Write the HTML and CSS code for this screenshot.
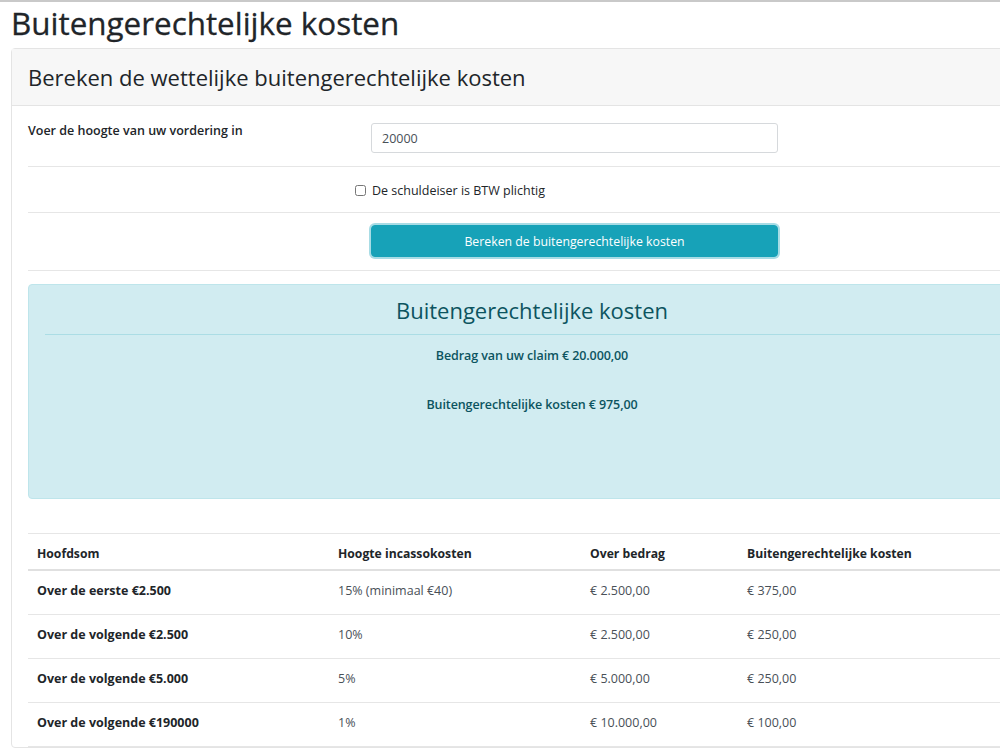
FILE: index.html
```html
<!DOCTYPE html>
<html lang="nl">
<head>
<meta charset="utf-8">
<title>Buitengerechtelijke kosten</title>
<link rel="stylesheet" href="styles.css">
</head>
<body>
<div class="page">
  <h1 class="title">Buitengerechtelijke kosten</h1>
  <div class="card">
    <div class="card-header">
      <h2 class="card-title">Bereken de wettelijke buitengerechtelijke kosten</h2>
    </div>
    <div class="card-body">
      <div class="form-row row-input">
        <label class="form-label" for="amount">Voer de hoogte van uw vordering in</label>
        <div class="form-field">
          <input id="amount" class="form-control" type="text" value="20000">
        </div>
      </div>
      <div class="form-row row-check">
        <div class="form-label"></div>
        <div class="form-field check-field">
          <input id="btw" class="check-input" type="checkbox">
          <label class="check-label" for="btw">De schuldeiser is BTW plichtig</label>
        </div>
      </div>
      <div class="form-row row-button">
        <div class="form-label"></div>
        <div class="form-field">
          <button class="btn" type="button">Bereken de buitengerechtelijke kosten</button>
        </div>
      </div>

      <div class="alert">
        <h4 class="alert-heading">Buitengerechtelijke kosten</h4>
        <hr class="alert-rule">
        <p class="alert-line">Bedrag van uw claim € 20.000,00</p>
        <p class="alert-line second">Buitengerechtelijke kosten € 975,00</p>
      </div>

      <table class="table">
        <thead>
          <tr>
            <th class="c1">Hoofdsom</th>
            <th class="c2">Hoogte incassokosten</th>
            <th class="c3">Over bedrag</th>
            <th class="c4">Buitengerechtelijke kosten</th>
          </tr>
        </thead>
        <tbody>
          <tr>
            <th>Over de eerste €2.500</th>
            <td>15% (minimaal €40)</td>
            <td>€ 2.500,00</td>
            <td>€ 375,00</td>
          </tr>
          <tr>
            <th>Over de volgende €2.500</th>
            <td>10%</td>
            <td>€ 2.500,00</td>
            <td>€ 250,00</td>
          </tr>
          <tr>
            <th>Over de volgende €5.000</th>
            <td>5%</td>
            <td>€ 5.000,00</td>
            <td>€ 250,00</td>
          </tr>
          <tr>
            <th>Over de volgende €190000</th>
            <td>1%</td>
            <td>€ 10.000,00</td>
            <td>€ 100,00</td>
          </tr>
        </tbody>
      </table>
    </div>
  </div>
</div>
</body>
</html>
```
FILE: styles.css
```css
html, body {
  margin: 0;
  padding: 0;
  overflow: hidden;
  background: #fff;
}
body {
  font-family: "Open Sans", "Noto Sans", sans-serif;
  color: #212529;
  font-size: 13px;
}
.page {
  border-top: 2px solid #c9c9c9;
  padding-left: 11px;
  width: 1100px;
}
.title {
  margin: 0;
  height: 46px;
  font-size: 31.4px;
  font-weight: 400;
  line-height: 42px;
  color: #212529;
  -webkit-text-stroke: 0.3px #212529;
}
.card {
  width: 1040px;
  border: 1px solid #e4e4e4;
  border-radius: 4px;
}
.card-header {
  background: #f7f7f7;
  border-bottom: 1px solid #e4e4e4;
  height: 56px;
  display: flex;
  align-items: center;
  padding: 0 16px;
}
.card-title {
  margin: 0;
  font-size: 22px;
  font-weight: 500;
  color: #212529;
}
.card-body {
  padding: 17px 16px 0;
}
.form-row {
  display: flex;
  border-bottom: 1px solid #e6e6e6;
}
.form-label {
  width: 343px;
  flex: none;
  font-weight: 600;
  font-size: 12.5px;
  line-height: 15px;
}
.row-input {
  padding-bottom: 13px;
}
.row-check {
  padding: 14px 0 13px;
}
.row-button {
  padding: 12px 0 13px;
}
.form-field {
  width: 407px;
}
.form-control {
  box-sizing: border-box;
  width: 100%;
  height: 30px;
  border: 1px solid #d6d9dc;
  border-radius: 3px;
  padding: 0 10px;
  font-family: inherit;
  font-size: 12.5px;
  color: #495057;
}
.check-field {
  display: flex;
  align-items: center;
  height: 18px;
  margin-left: -16px;
}
.check-input {
  margin: 0 6px 0 0;
  width: 11px;
  height: 11px;
}
.check-label {
  font-size: 12.5px;
  color: #212529;
}
.btn {
  box-sizing: border-box;
  width: 100%;
  height: 32px;
  background: #17a2b8;
  border: 1px solid #17a2b8;
  border-radius: 4px;
  box-shadow: 0 0 0 2px rgba(82, 186, 203, 0.5);
  color: #fff;
  font-family: inherit;
  font-size: 12.3px;
}
.alert {
  margin-top: 13px;
  background: #d1ecf1;
  border: 1px solid #bee5eb;
  border-radius: 4px;
  color: #0c5460;
  height: 215px;
  box-sizing: border-box;
  padding: 11px 16px 0;
  text-align: center;
}
.alert-heading {
  margin: 0;
  font-size: 22px;
  font-weight: 500;
  line-height: 28px;
}
.alert-rule {
  margin: 10px 0 0;
  border: 0;
  border-top: 1px solid #abdde5;
}
.alert-line {
  margin: 11px 0 0;
  font-size: 12.5px;
  line-height: 20px;
  font-weight: 600;
  letter-spacing: -0.1px;
}
.alert-line.second {
  margin-top: 29px;
}
.table {
  margin-top: 34px;
  width: 100%;
  border-collapse: collapse;
}
.table th, .table td {
  text-align: left;
  padding: 11px 9px 14px;
  line-height: 18px;
  border-top: 1px solid #e6e6e6;
  font-size: 12.5px;
  vertical-align: top;
}
.table thead th {
  padding: 11px 9px 6px;
  border-bottom: 2px solid #e0e0e0;
  font-weight: 700;
  font-size: 12.2px;
}
.table tbody th {
  font-weight: 700;
}
.table td {
  color: #495057;
}
.table tbody tr:last-child th, .table tbody tr:last-child td {
  border-bottom: 1px solid #e6e6e6;
}
.c1 { width: 283px; }
.c2 { width: 234px; }
.c3 { width: 139px; }
```
